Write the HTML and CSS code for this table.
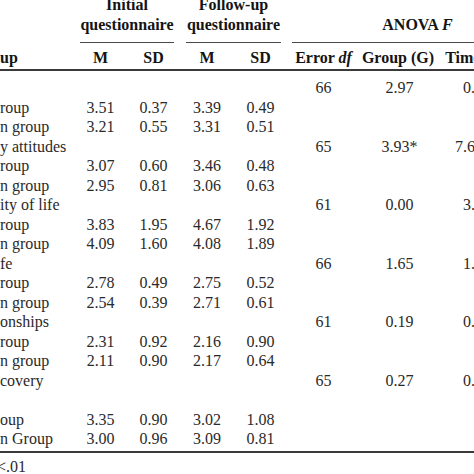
FILE: index.html
```html
<!DOCTYPE html>
<html lang="en">
<head>
<meta charset="utf-8">
<title>Table</title>
<link rel="stylesheet" href="styles.css">
</head>
<body>
<div class="page">
  <table class="stats">
    <colgroup>
      <col class="c-label"><col class="c-m1"><col class="c-sd1"><col class="c-m2"><col class="c-sd2"><col class="c-err"><col class="c-g"><col class="c-t"><col class="c-gt">
    </colgroup>
    <thead>
      <tr class="group-head">
        <th></th>
        <th colspan="2"><div class="span">Initial<br>questionnaire</div></th>
        <th colspan="2"><div class="span">Follow-up<br>questionnaire</div></th>
        <th colspan="4"><div class="span anova">ANOVA <i>F</i></div></th>
      </tr>
      <tr class="col-head">
        <th class="label">up</th>
        <th>M</th><th>SD</th><th>M</th><th>SD</th>
        <th>Error <i>df</i></th><th>Group (G)</th><th class="time">Time (T)</th><th>G × T</th>
      </tr>
    </thead>
    <tbody>
      <tr class="first"><td class="label"></td><td></td><td></td><td></td><td></td><td>66</td><td class="g">2.97</td><td>0.71</td><td>1.02</td></tr>
      <tr><td class="label">roup</td><td>3.51</td><td>0.37</td><td>3.39</td><td>0.49</td><td></td><td></td><td></td><td></td></tr>
      <tr><td class="label">n group</td><td>3.21</td><td>0.55</td><td>3.31</td><td>0.51</td><td></td><td></td><td></td><td></td></tr>
      <tr><td class="label">y attitudes</td><td></td><td></td><td></td><td></td><td>65</td><td class="g">3.93*</td><td>7.61**</td><td>0.84</td></tr>
      <tr><td class="label">roup</td><td>3.07</td><td>0.60</td><td>3.46</td><td>0.48</td><td></td><td></td><td></td><td></td></tr>
      <tr><td class="label">n group</td><td>2.95</td><td>0.81</td><td>3.06</td><td>0.63</td><td></td><td></td><td></td><td></td></tr>
      <tr><td class="label">ity of life</td><td></td><td></td><td></td><td></td><td>61</td><td class="g">0.00</td><td>3.12</td><td>2.40</td></tr>
      <tr><td class="label">roup</td><td>3.83</td><td>1.95</td><td>4.67</td><td>1.92</td><td></td><td></td><td></td><td></td></tr>
      <tr><td class="label">n group</td><td>4.09</td><td>1.60</td><td>4.08</td><td>1.89</td><td></td><td></td><td></td><td></td></tr>
      <tr><td class="label">fe</td><td></td><td></td><td></td><td></td><td>66</td><td class="g">1.65</td><td>1.54</td><td>0.36</td></tr>
      <tr><td class="label">roup</td><td>2.78</td><td>0.49</td><td>2.75</td><td>0.52</td><td></td><td></td><td></td><td></td></tr>
      <tr><td class="label">n group</td><td>2.54</td><td>0.39</td><td>2.71</td><td>0.61</td><td></td><td></td><td></td><td></td></tr>
      <tr><td class="label">onships</td><td></td><td></td><td></td><td></td><td>61</td><td class="g">0.19</td><td>0.45</td><td>0.02</td></tr>
      <tr><td class="label">roup</td><td>2.31</td><td>0.92</td><td>2.16</td><td>0.90</td><td></td><td></td><td></td><td></td></tr>
      <tr><td class="label">n group</td><td>2.11</td><td>0.90</td><td>2.17</td><td>0.64</td><td></td><td></td><td></td><td></td></tr>
      <tr><td class="label">covery</td><td></td><td></td><td></td><td></td><td>65</td><td class="g">0.27</td><td>0.38</td><td>1.17</td></tr>
      <tr><td class="label"></td><td></td><td></td><td></td><td></td><td></td><td></td><td></td><td></td></tr>
      <tr><td class="label">oup</td><td>3.35</td><td>0.90</td><td>3.02</td><td>1.08</td><td></td><td></td><td></td><td></td></tr>
      <tr class="last"><td class="label">n Group</td><td>3.00</td><td>0.96</td><td>3.09</td><td>0.81</td><td></td><td></td><td></td><td></td></tr>
    </tbody>
  </table>
  <p class="note">&lt;.01</p>
</div>
</body>
</html>
```

FILE: styles.css
```css
html, body {
  margin: 0;
  padding: 0;
  overflow: hidden;
  background: #ffffff;
}

body {
  font-family: "Liberation Serif", "Times New Roman", serif;
  font-size: 16px;
  color: #2a2a2a;
}

.page {
  margin-top: -5px;
}

.stats {
  border-collapse: separate;
  border-spacing: 0;
  table-layout: fixed;
  width: 548px;
}

.c-label { width: 74px; }
.c-m1 { width: 53px; }
.c-sd1 { width: 53px; }
.c-m2 { width: 54px; }
.c-sd2 { width: 53px; }
.c-err { width: 73px; }
.c-g { width: 76px; }
.c-t { width: 82px; }
.c-gt { width: 30px; }

.stats th {
  font-weight: bold;
  color: #141414;
  padding: 0;
  text-align: center;
  white-space: nowrap;
}

.group-head th {
  line-height: 20px;
  vertical-align: bottom;
}

.group-head .span {
  margin: 0 6px;
  padding-bottom: 7px;
  border-bottom: 1px solid #4a4a4a;
}

.group-head .anova {
  margin: 0 5px;
}

.col-head th {
  line-height: 19.5px;
  padding: 5px 0 1px;
  border-bottom: 2px solid #3a3a3a;
}

.col-head th.time {
  padding-right: 3px;
}

.stats .label {
  text-align: left;
}

.stats tbody tr {
  height: 19.5px;
}

.stats td {
  padding: 0;
  line-height: 19.5px;
  text-align: center;
  vertical-align: top;
  white-space: nowrap;
}

.stats td.g {
  padding-left: 3px;
}

.stats tr.first td {
  padding-top: 7.85px;
}

.stats tr.last td {
  padding-bottom: 2px;
  border-bottom: 2px solid #3a3a3a;
}

.note {
  margin: 4px 0 0;
  line-height: 19.5px;
  text-indent: -3px;
}
```
